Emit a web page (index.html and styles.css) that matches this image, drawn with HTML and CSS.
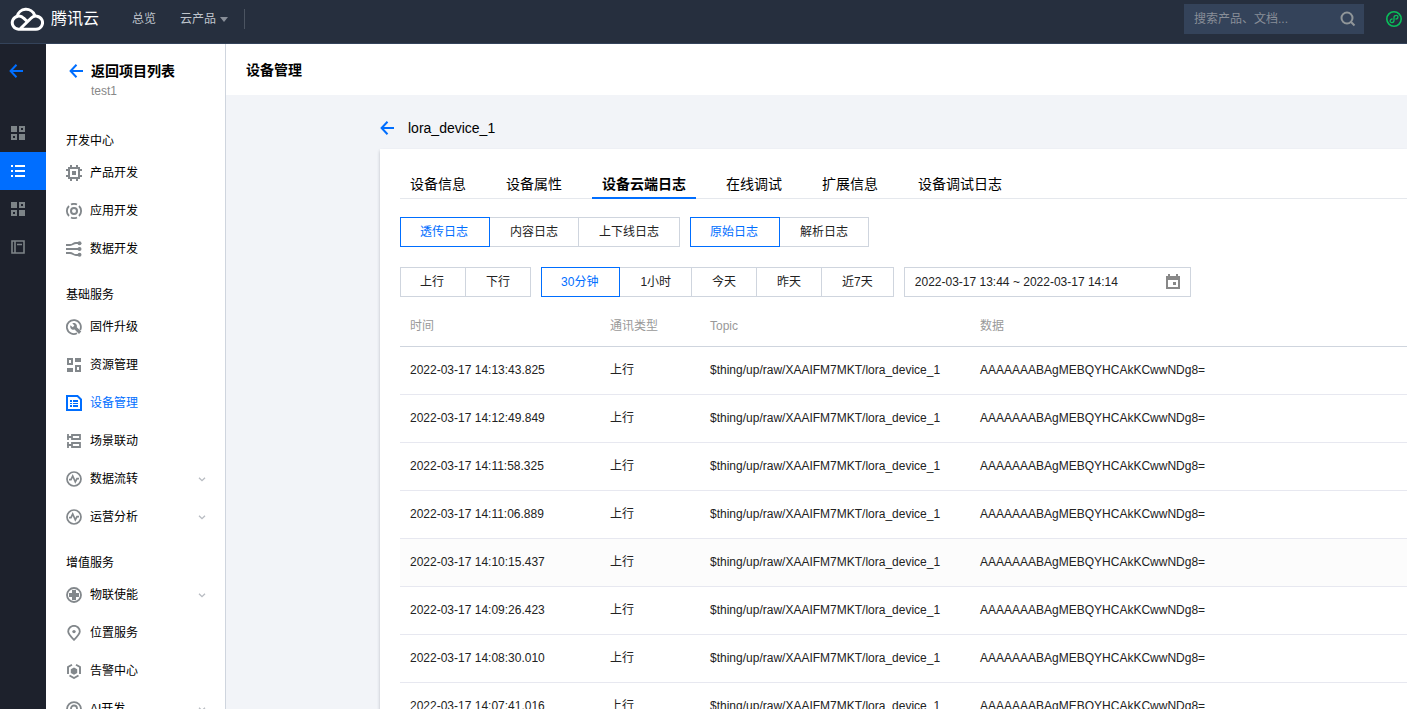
FILE: index.html
```html
<!DOCTYPE html>
<html lang="zh-CN">
<head>
    <meta charset="UTF-8">
    <title>设备管理</title>
    <link rel="stylesheet" href="styles.css">
</head>
<body>
    <svg class="sprite" aria-hidden="true">
        <symbol id="i-back" viewBox="0 0 14 14"><path d="M7.5 .8L1.6 7l5.9 6.2M1.8 7H14" fill="none" stroke="currentColor" stroke-width="2"/></symbol>
        <symbol id="i-grid" viewBox="0 0 14 14"><path d="M0 0h6v6H0zM8 8h6v6H8z"/><path d="M9 1h4v4H9zM1 9h4v4H1z" fill="none" stroke="currentColor" stroke-width="2"/></symbol>
        <symbol id="i-list" viewBox="0 0 14 14"><path d="M0 1h2v2H0zM4 1h10v2H4zM0 6h2v2H0zM4 6h10v2H4zM0 11h2v2H0zM4 11h10v2H4z"/></symbol>
        <symbol id="i-book" viewBox="0 0 14 14"><path d="M1 1h12v12H1zM4 1v12M6 4.5h5" fill="none" stroke="currentColor" stroke-width="1.6"/></symbol>
        <symbol id="i-chip" viewBox="0 0 16 16"><path d="M3 3h10v10H3zM5 0v3M11 0v3M5 13v3M11 13v3M0 5h3M0 11h3M13 5h3M13 11h3" fill="none" stroke="currentColor" stroke-width="2"/><path d="M6 6h4v4H6z"/></symbol>
        <symbol id="i-app" viewBox="0 0 16 16"><g fill="none" stroke="currentColor"><circle cx="8" cy="8" r="3" stroke-width="2"/><path d="M5 1.5a7.2 7.2 0 0 1 6 0M5 14.5a7.2 7.2 0 0 0 6 0M3 3a7 7 0 0 0 0 10M13 3a7 7 0 0 1 0 10" stroke-width="1.8"/></g></symbol>
        <symbol id="i-data" viewBox="0 0 16 16"><path d="M0 4h4c3 0 3-2 6-2h3M0 8h13M0 12h4c3 0 3 2 6 2h3" fill="none" stroke="currentColor" stroke-width="1.8"/><circle cx="13.5" cy="2.2" r="2"/><circle cx="13.5" cy="8" r="2"/><circle cx="13.5" cy="13.8" r="2"/></symbol>
        <symbol id="i-wrench" viewBox="0 0 16 16"><path d="M11 14.3A7 7 0 1 1 14.2 11" fill="none" stroke="currentColor" stroke-width="1.8"/><path d="M4.4 6.2l2.3 2 1.7-1.6-2.1-2.3c2.8-1 5.3 1.2 4.5 4l4.5 4.3-2.3 2.3-4.4-4.3c-2.8.8-5.1-1.6-4.2-4.4z"/></symbol>
        <symbol id="i-resource" viewBox="0 0 16 16"><path d="M2 2h4v5H2zM10 9h4v5h-4z" fill="none" stroke="currentColor" stroke-width="2"/><path d="M9 1h6v4H9zM1 11h6v4H1z"/></symbol>
        <symbol id="i-device" viewBox="0 0 16 16"><path d="M1 1h10.5L15 4.5V15H1z" fill="none" stroke="currentColor" stroke-width="2"/><path d="M4 5h2v2H4zM7 5h5v2H7zM4 8h2v1H4zM7 8h5v1H7zM4 10h2v2H4zM7 10h5v2H7z"/></symbol>
        <symbol id="i-scene" viewBox="0 0 16 16"><path d="M6 2h8v4H6zM6 10h8v4H6zM1 4h5M1 12h5M2 1v6M2 9v6" fill="none" stroke="currentColor" stroke-width="1.8"/></symbol>
        <symbol id="i-flow" viewBox="0 0 16 16"><g fill="none" stroke="currentColor" stroke-width="1.7"><circle cx="8" cy="8" r="7"/><path d="M3 8.6h2L6.7 5l2.6 5.8L11 7.6h2"/></g></symbol>
        <symbol id="i-plus" viewBox="0 0 16 16"><circle cx="8" cy="8" r="7" fill="none" stroke="currentColor" stroke-width="1.8"/><path d="M6 3h4v3h3v4h-3v3H6v-3H3V6h3z"/></symbol>
        <symbol id="i-pin" viewBox="0 0 16 16"><path d="M8 14.8C4.5 11.5 2.2 9 2.2 6.6a5.8 5.8 0 0 1 11.6 0C13.8 9 11.5 11.5 8 14.8z" fill="none" stroke="currentColor" stroke-width="1.8"/><circle cx="8" cy="6.6" r="1.7"/></symbol>
        <symbol id="i-alarm" viewBox="0 0 16 16"><path d="M6 1.7L2 4v7M10 1.7L14 4v7M3.5 12.5L8 15l4.5-2.5" fill="none" stroke="currentColor" stroke-width="1.9"/><path d="M8 4.5l3.2 1.8v3.6L8 11.7 4.8 9.9V6.3z"/></symbol>
        <symbol id="i-ai" viewBox="0 0 16 16"><g fill="none" stroke="currentColor" stroke-width="1.8"><path d="M3 13A7 7 0 1 1 13 13"/><circle cx="8" cy="7.5" r="3"/><path d="M8 10v5"/></g></symbol>
        <symbol id="i-down" viewBox="0 0 8 5"><path d="M1 .7L4 3.7 7 .7" fill="none" stroke="currentColor" stroke-width="1.3"/></symbol>
    </svg>

    <header class="topbar">
        <a class="logo" href="#">
            <svg width="34" height="24" viewBox="0 0 34 24" fill="none" stroke="#fff" stroke-width="3"><path d="M7 9.5A9.3 9.3 0 0 1 24.7 8.2"/><path d="M17.2 14.5l-3.500-3.3A6.6 6.6 0 1 0 8.500 22.300H26a6.600 6.600 0 1 0-5-11L10.500 21.500"/></svg>
            <span>腾讯云</span>
        </a>
        <nav class="topnav">
            <a href="#">总览</a>
            <a href="#">云产品<i class="caret"></i></a>
        </nav>
        <div class="search">
            <input type="text" aria-label="搜索" placeholder="搜索产品、文档...">
            <svg width="16" height="16" viewBox="0 0 16 16" fill="none" stroke="#909699" stroke-width="2"><circle cx="7" cy="7" r="5.5"/><path d="M10.8 10.8l3.7 3.7"/></svg>
        </div>
        <a class="mini" href="#" aria-label="小程序">
            <svg width="16" height="16" viewBox="0 0 16 16" fill="none" stroke="#0abf5b"><circle cx="8" cy="8" r="7.2" stroke-width="1.6"/><path d="M9.5 8.2c3.5-.6 2.8-4 .6-3.8C8.600 4.5 8 5.3 8 6.5v3c0 1.3-.8 2-2 2.1-2.3.1-2.9-3.2.6-3.8" stroke-width="1.3"/></svg>
        </a>
    </header>

    <div class="layout">
        <nav class="rail">
            <a class="rail-back" href="#" aria-label="返回"><svg><use href="#i-back"/></svg></a>
            <a href="#" aria-label="概览"><svg><use href="#i-grid"/></svg></a>
            <a class="active" href="#" aria-label="项目列表"><svg><use href="#i-list"/></svg></a>
            <a href="#" aria-label="应用"><svg><use href="#i-grid"/></svg></a>
            <a href="#" aria-label="文档"><svg><use href="#i-book"/></svg></a>
        </nav>

        <aside class="sidebar">
            <div class="project">
                <a href="#"><svg><use href="#i-back"/></svg>返回项目列表</a>
                <p>test1</p>
            </div>
            <h3>开发中心</h3>
            <ul>
                <li><a href="#"><svg><use href="#i-chip"/></svg>产品开发</a></li>
                <li><a href="#"><svg><use href="#i-app"/></svg>应用开发</a></li>
                <li><a href="#"><svg><use href="#i-data"/></svg>数据开发</a></li>
            </ul>
            <h3>基础服务</h3>
            <ul>
                <li><a href="#"><svg><use href="#i-wrench"/></svg>固件升级</a></li>
                <li><a href="#"><svg><use href="#i-resource"/></svg>资源管理</a></li>
                <li><a class="active" href="#"><svg><use href="#i-device"/></svg>设备管理</a></li>
                <li><a href="#"><svg><use href="#i-scene"/></svg>场景联动</a></li>
                <li><a href="#"><svg><use href="#i-flow"/></svg>数据流转<svg class="more"><use href="#i-down"/></svg></a></li>
                <li><a href="#"><svg><use href="#i-flow"/></svg>运营分析<svg class="more"><use href="#i-down"/></svg></a></li>
            </ul>
            <h3>增值服务</h3>
            <ul>
                <li><a href="#"><svg><use href="#i-plus"/></svg>物联使能<svg class="more"><use href="#i-down"/></svg></a></li>
                <li><a href="#"><svg><use href="#i-pin"/></svg>位置服务</a></li>
                <li><a href="#"><svg><use href="#i-alarm"/></svg>告警中心</a></li>
                <li><a href="#"><svg><use href="#i-ai"/></svg>AI开发<svg class="more"><use href="#i-down"/></svg></a></li>
            </ul>
        </aside>

        <main>
            <h1>设备管理</h1>
            <div class="content">
                <h2><a href="#" aria-label="返回"><svg><use href="#i-back"/></svg></a>lora_device_1</h2>
                <section class="card">
                    <nav class="tabs">
                        <a href="#">设备信息</a>
                        <a href="#">设备属性</a>
                        <a class="active" href="#">设备云端日志</a>
                        <a href="#">在线调试</a>
                        <a href="#">扩展信息</a>
                        <a href="#">设备调试日志</a>
                    </nav>
                    <div class="filters">
                        <div class="segment">
                            <button class="active">透传日志</button>
                            <button>内容日志</button>
                            <button>上下线日志</button>
                        </div>
                        <div class="segment">
                            <button class="active">原始日志</button>
                            <button>解析日志</button>
                        </div>
                    </div>
                    <div class="filters">
                        <div class="segment">
                            <button>上行</button>
                            <button>下行</button>
                        </div>
                        <div class="segment">
                            <button class="active">30分钟</button>
                            <button>1小时</button>
                            <button>今天</button>
                            <button>昨天</button>
                            <button>近7天</button>
                        </div>
                        <div class="date">
                            <input type="text" aria-label="时间范围" value="2022-03-17 13:44 ~ 2022-03-17 14:14">
                            <svg width="14" height="16" viewBox="0 0 14 16" fill="#888"><path fill-rule="evenodd" d="M2 0h2v2h6V0h2v2h2v13H0V2h2zM2 6v7h10V6zM7 8h3v3H7z"/></svg>
                        </div>
                    </div>
                    <table>
                        <thead>
                            <tr><th class="col-time">时间</th><th class="col-type">通讯类型</th><th class="col-topic">Topic</th><th>数据</th></tr>
                        </thead>
                        <tbody>
                            <tr><td>2022-03-17 14:13:43.825</td><td>上行</td><td>$thing/up/raw/XAAIFM7MKT/lora_device_1</td><td>AAAAAAABAgMEBQYHCAkKCwwNDg8=</td></tr>
                            <tr><td>2022-03-17 14:12:49.849</td><td>上行</td><td>$thing/up/raw/XAAIFM7MKT/lora_device_1</td><td>AAAAAAABAgMEBQYHCAkKCwwNDg8=</td></tr>
                            <tr><td>2022-03-17 14:11:58.325</td><td>上行</td><td>$thing/up/raw/XAAIFM7MKT/lora_device_1</td><td>AAAAAAABAgMEBQYHCAkKCwwNDg8=</td></tr>
                            <tr><td>2022-03-17 14:11:06.889</td><td>上行</td><td>$thing/up/raw/XAAIFM7MKT/lora_device_1</td><td>AAAAAAABAgMEBQYHCAkKCwwNDg8=</td></tr>
                            <tr class="hover"><td>2022-03-17 14:10:15.437</td><td>上行</td><td>$thing/up/raw/XAAIFM7MKT/lora_device_1</td><td>AAAAAAABAgMEBQYHCAkKCwwNDg8=</td></tr>
                            <tr><td>2022-03-17 14:09:26.423</td><td>上行</td><td>$thing/up/raw/XAAIFM7MKT/lora_device_1</td><td>AAAAAAABAgMEBQYHCAkKCwwNDg8=</td></tr>
                            <tr><td>2022-03-17 14:08:30.010</td><td>上行</td><td>$thing/up/raw/XAAIFM7MKT/lora_device_1</td><td>AAAAAAABAgMEBQYHCAkKCwwNDg8=</td></tr>
                            <tr><td>2022-03-17 14:07:41.016</td><td>上行</td><td>$thing/up/raw/XAAIFM7MKT/lora_device_1</td><td>AAAAAAABAgMEBQYHCAkKCwwNDg8=</td></tr>
                        </tbody>
                    </table>
                </section>
            </div>
        </main>
    </div>
</body>
</html>
```

FILE: styles.css
```css
* {
    box-sizing: border-box;
}
body {
    margin: 0;
    height: 100vh;
    overflow: hidden;
    display: flex;
    flex-direction: column;
    font-family: "Liberation Sans", "Noto Sans CJK SC", sans-serif;
    font-size: 12px;
    line-height: 20px;
    color: #000;
    fill: currentColor;
    background-color: #f2f4f8;
}
h1, h2, h3, p, ul {
    margin: 0;
    padding: 0;
}
ul {
    list-style: none;
}
a {
    color: inherit;
    text-decoration: none;
}
svg {
    flex: none;
}
button, input {
    font: inherit;
}
.sprite {
    position: absolute;
    width: 0;
    height: 0;
}

/* top bar */
.topbar {
    flex: none;
    display: flex;
    align-items: center;
    height: 44px;
    padding: 0 0 5px 10px;
    background-color: #262f3e;
    border-bottom: 1px solid #34435a;
    color: #bfc4cc;
}
.logo {
    display: flex;
    align-items: center;
    gap: 7px;
    color: #fff;
    font-size: 16px;
}
.topnav {
    display: flex;
    align-items: center;
    gap: 24px;
    margin-left: 33px;
    padding-right: 16px;
    border-right: 1px solid #4b5461;
}
.topnav a {
    display: flex;
    align-items: center;
    gap: 4px;
}
.caret {
    border: 4px solid transparent;
    border-top: 5px solid #888e98;
    border-bottom: 0;
}
.search {
    display: flex;
    align-items: center;
    width: 180px;
    height: 30px;
    margin-left: auto;
    padding: 0 8px 0 10px;
    background-color: #34435a;
}
.search input {
    flex: 1;
    min-width: 0;
    padding: 0;
    border: 0;
    outline: 0;
    background: none;
    color: #fff;
}
.search input::placeholder {
    color: #888e98;
}
.mini {
    margin: 0 5px 0 22px;
}
.mini svg {
    display: block;
}

.layout {
    flex: 1;
    min-height: 0;
    display: flex;
}

/* dark icon rail */
.rail {
    flex: none;
    width: 46px;
    background-color: #1d212c;
    color: #7d8488;
}
.rail a {
    display: flex;
    align-items: center;
    height: 38px;
    padding-left: 11px;
}
.rail svg {
    width: 14px;
    height: 14px;
}
.rail .active {
    background-color: #006eff;
    color: #fff;
}
.rail .rail-back {
    margin: 8px 0 24px;
    padding-left: 9px;
    color: #006eff;
}

/* menu */
.sidebar {
    flex: none;
    width: 180px;
    overflow: hidden;
    background-color: #fff;
    border-right: 1px solid #cfd5de;
}
.project {
    padding: 17px 0 13px 23px;
}
.project a {
    display: flex;
    align-items: center;
    gap: 8px;
    font-size: 14px;
    font-weight: bold;
}
.project svg {
    width: 14px;
    height: 14px;
    color: #006eff;
}
.project p {
    padding-left: 22px;
    color: #888;
}
.sidebar h3 {
    padding: 17px 20px 3px;
    font-size: 12px;
    font-weight: normal;
}
.sidebar li a {
    display: flex;
    align-items: center;
    gap: 8px;
    height: 38px;
    padding: 0 19px 0 20px;
}
.sidebar li svg {
    width: 16px;
    height: 16px;
    color: #82878b;
}
.sidebar li .active, .sidebar .active svg {
    color: #006eff;
}
.sidebar li .more {
    width: 8px;
    height: 5px;
    margin-left: auto;
    color: #b8bcc2;
}

/* content */
main {
    flex: 1;
    min-width: 0;
    overflow: hidden;
}
h1 {
    padding: 16px 20px 15px;
    font-size: 14px;
    background-color: #fff;
}
.content {
    padding-left: 154px;
}
h2 {
    display: flex;
    align-items: center;
    gap: 14px;
    padding: 23px 0 11px;
    font-size: 14px;
    font-weight: normal;
}
h2 svg {
    display: block;
    width: 14px;
    height: 14px;
    color: #006eff;
}
.card {
    padding: 20px 0 20px 20px;
    background-color: #fff;
    box-shadow: 0 2px 3px rgba(54, 58, 80, 0.3);
}
.tabs {
    display: flex;
    gap: 20px;
    margin-bottom: 18px;
    border-bottom: 1px solid #e5e8ed;
    font-size: 14px;
}
.tabs a {
    padding: 5px 10px;
    height: 30px;
    margin-bottom: -1px;
}
.tabs .active {
    font-weight: bold;
    border-bottom: 2px solid #006eff;
}
.filters {
    display: flex;
    gap: 10px;
    margin-bottom: 20px;
}
.segment {
    display: flex;
}
.segment button {
    height: 30px;
    padding: 0 20px 0 19px;
    border: 1px solid #cfd5de;
    background-color: #fff;
    color: #222;
    white-space: nowrap;
    cursor: pointer;
}
.segment button + button {
    margin-left: -1px;
    padding-left: 20px;
}
.segment button:first-child {
    padding-right: 21px;
}
.segment .active {
    z-index: 1;
    border-color: #006eff;
    color: #006eff;
}
.date {
    display: flex;
    align-items: center;
    width: 287px;
    height: 30px;
    padding: 0 10px;
    border: 1px solid #cfd5de;
}
.date input {
    flex: 1;
    min-width: 0;
    padding: 0;
    border: 0;
    outline: 0;
    color: #222;
}
table {
    width: 100%;
    margin-top: -10px;
    table-layout: fixed;
    border-collapse: separate;
    border-spacing: 0;
    color: #222;
}
th, td {
    padding: 0 10px 2px;
    text-align: left;
    white-space: nowrap;
}
th {
    height: 40px;
    font-weight: normal;
    color: #999;
    border-bottom: 1px solid #cfd5de;
}
td {
    height: 48px;
    border-bottom: 1px solid #e7e8f0;
}
.col-time {
    width: 200px;
}
.col-type {
    width: 100px;
}
.col-topic {
    width: 270px;
}
.hover {
    background-color: #fcfcfc;
}
```
